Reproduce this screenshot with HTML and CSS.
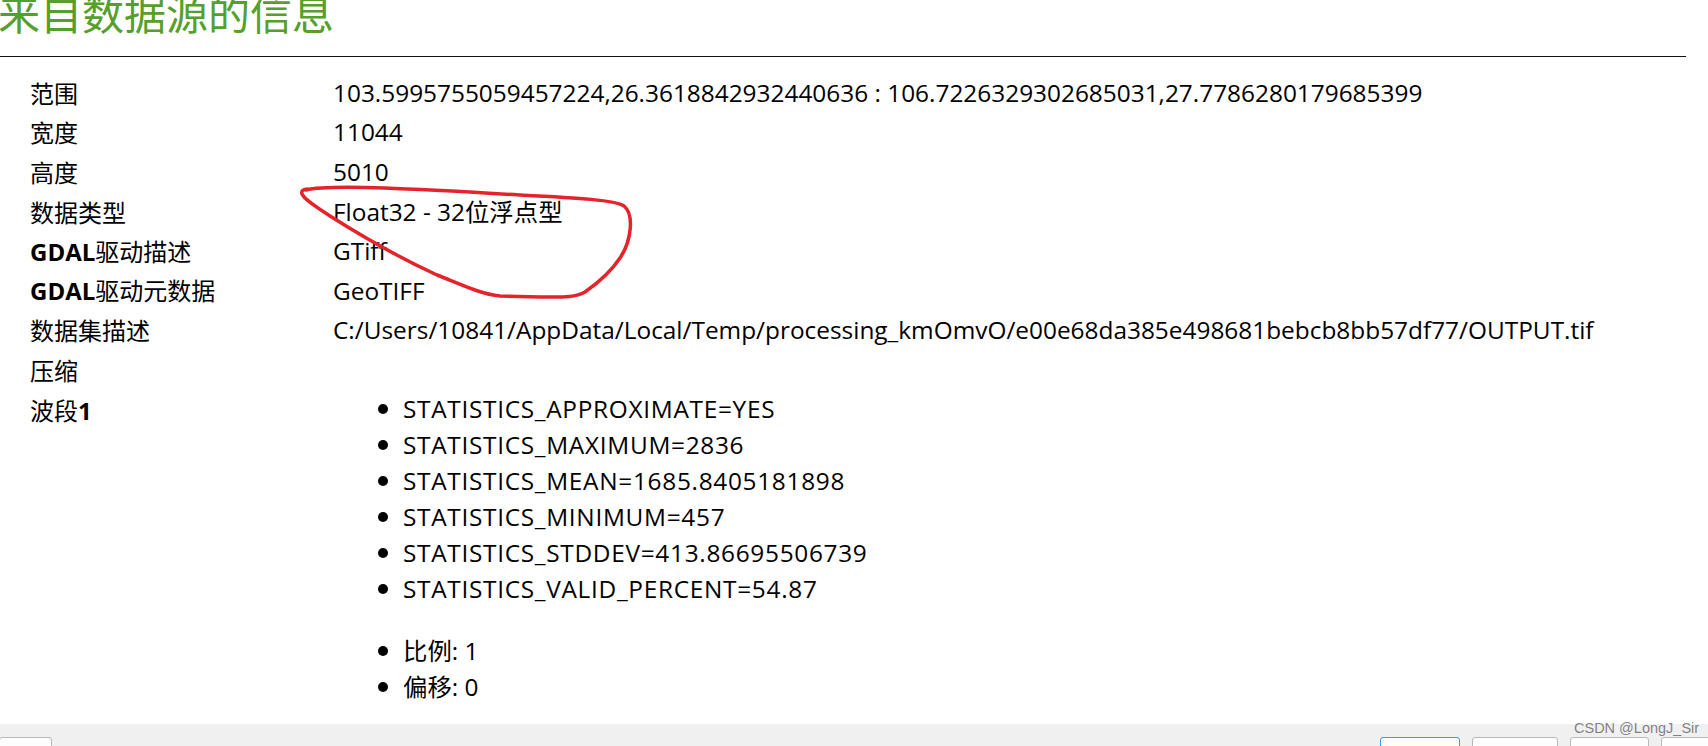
FILE: index.html
```html
<!DOCTYPE html>
<html lang="zh-CN">
<head>
<meta charset="utf-8">
<title>来自数据源的信息</title>
<link rel="stylesheet" href="styles.css">
</head>
<body>
<div class="page">
  <div class="content">
    <h2 class="title">来自数据源的信息</h2>
    <div class="rule"></div>
    <table class="info">
      <tr><td class="label">范围</td><td class="value">103.5995755059457224,26.3618842932440636 : 106.7226329302685031,27.7786280179685399</td></tr>
      <tr><td class="label">宽度</td><td class="value">11044</td></tr>
      <tr><td class="label">高度</td><td class="value">5010</td></tr>
      <tr><td class="label">数据类型</td><td class="value">Float32 - 32位浮点型</td></tr>
      <tr><td class="label"><b>GDAL</b>驱动描述</td><td class="value">GTiff</td></tr>
      <tr><td class="label"><b>GDAL</b>驱动元数据</td><td class="value">GeoTIFF</td></tr>
      <tr><td class="label">数据集描述</td><td class="value">C:/Users/10841/AppData/Local/Temp/processing_kmOmvO/e00e68da385e498681bebcb8bb57df77/OUTPUT.tif</td></tr>
      <tr><td class="label">压缩</td><td class="value"></td></tr>
      <tr>
        <td class="label top">波段<b>1</b></td>
        <td class="value top">
          <ul class="list">
            <li>STATISTICS_APPROXIMATE=YES</li>
            <li>STATISTICS_MAXIMUM=2836</li>
            <li>STATISTICS_MEAN=1685.8405181898</li>
            <li>STATISTICS_MINIMUM=457</li>
            <li>STATISTICS_STDDEV=413.86695506739</li>
            <li>STATISTICS_VALID_PERCENT=54.87</li>
          </ul>
          <ul class="list second">
            <li>比例: 1</li>
            <li>偏移: 0</li>
          </ul>
        </td>
      </tr>
    </table>
    <svg class="annot" width="1708" height="746" viewBox="0 0 1708 746" aria-hidden="true">
      <path d="M 306,190 C 330,184 420,189 520,195 C 580,198 615,200 624,206 C 634,214 632,240 620,258 C 610,273 595,285 585,292 C 575,298 560,297 540,297 L 500,296 C 480,294 460,284 437,275 C 400,258 360,235 330,216 C 315,206 305,200 302,194 C 301,191 303,189 308,189" fill="none" stroke="#e5232a" stroke-width="3.5" stroke-linecap="round" stroke-linejoin="round"/>
    </svg>
  </div>
  <div class="buttonbar">
    <div class="btn btn-left"></div>
    <div class="btn-group">
      <div class="btn focused"></div>
      <div class="btn wide"></div>
      <div class="btn"></div>
      <div class="btn"></div>
    </div>
    <span class="watermark">CSDN @LongJ_Sir</span>
  </div>
</div>
</body>
</html>
```
FILE: styles.css
```css
html, body {
  margin: 0;
  padding: 0;
  background: #ffffff;
}
body {
  width: 1708px;
  height: 746px;
  overflow: hidden;
  font-family: "Open Sans", "Noto Sans CJK SC", sans-serif;
  color: #000;
}
.page {
  display: flex;
  flex-direction: column;
  height: 746px;
  position: relative;
}
.content {
  height: 724px;
  flex: none;
  background: #fff;
}
.title {
  margin: -9px 0 0 -2px;
  font-family: "Noto Sans CJK SC", sans-serif;
  font-weight: 400;
  font-size: 42px;
  line-height: 42px;
  color: #55a02c;
}
.rule {
  margin-top: 23px;
  width: 1686px;
  height: 1px;
  background: #111;
}
.info {
  margin-top: 16px;
  border-collapse: collapse;
  font-size: 24.4px;
}
.info td {
  padding: 0;
  height: 39.6px;
  line-height: 30px;
  vertical-align: middle;
  white-space: nowrap;
}
.label {
  width: 333px;
  padding-left: 30px !important;
  box-sizing: border-box;
  font-family: "Noto Sans CJK SC", sans-serif;
  font-size: 24px;
}
.label b {
  font-family: "Open Sans", sans-serif;
  font-weight: 700;
}
.value {
  font-family: "Open Sans", "Noto Sans CJK SC", sans-serif;
}
.info td.top {
  vertical-align: top;
}
.info td.label.top {
  padding-top: 4.8px;
}
.list {
  list-style: none;
  margin: 0;
  padding: 1.8px 0 0 45px;
}
.list li {
  display: flex;
  align-items: center;
  height: 35.9px;
  line-height: 30px;
  letter-spacing: 0.7px;
}
.list li::before {
  content: "";
  flex: none;
  width: 10px;
  height: 10px;
  border-radius: 50%;
  background: #000;
  margin-right: 15px;
}
.list.second {
  margin-top: 26px;
  padding-top: 0;
}
.list.second li {
  letter-spacing: 0;
}
.annot {
  position: absolute;
  left: 0;
  top: 0;
  pointer-events: none;
}
.buttonbar {
  flex: 1;
  background: #f0f0f0;
  display: flex;
  align-items: flex-start;
  padding-top: 13px;
  position: relative;
}
.btn {
  height: 30px;
  width: 79px;
  box-sizing: border-box;
  border: 1px solid #b9b9b9;
  border-radius: 3px;
  background: #fdfdfd;
  flex: none;
}
.btn-left {
  width: 53px;
  margin-left: -1px;
}
.btn-group {
  margin-left: auto;
  display: flex;
  gap: 12px;
  margin-right: -32px;
}
.btn.focused {
  border-color: #3d9be9;
  width: 80px;
}
.btn.wide {
  width: 86px;
}
.watermark {
  position: absolute;
  left: 1574px;
  top: -4px;
  font-family: "Liberation Sans", sans-serif;
  font-size: 14.5px;
  color: rgba(90, 90, 90, 0.75);
}
```
